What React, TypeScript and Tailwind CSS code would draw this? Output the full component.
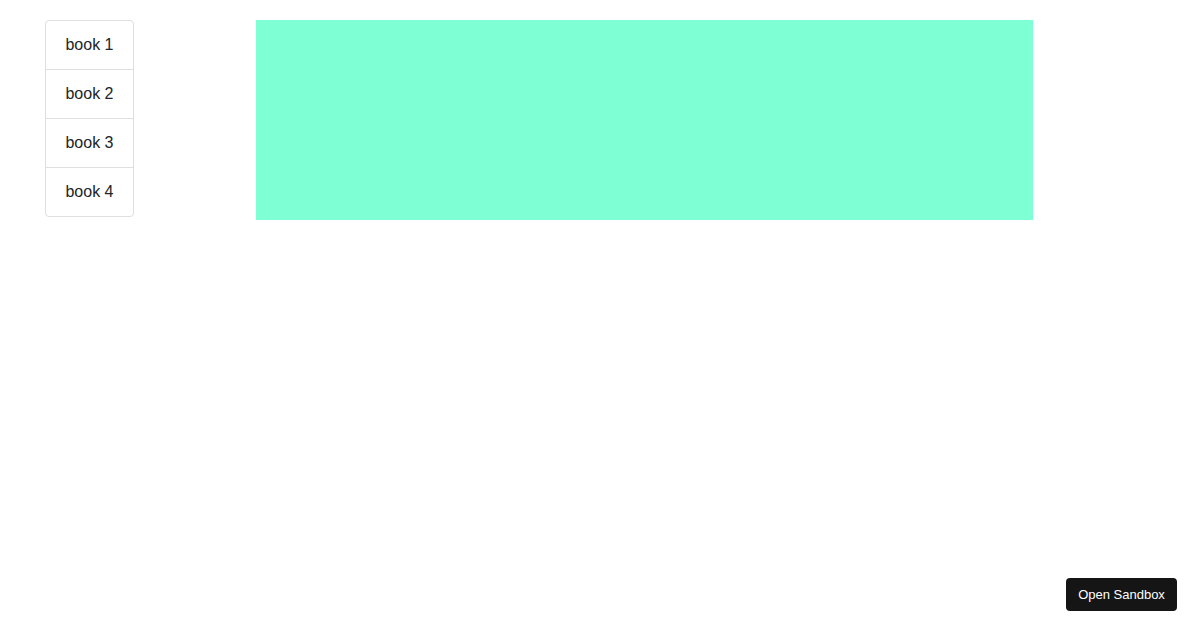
const books = ["book 1", "book 2", "book 3", "book 4"];

export default function App() {
  return (
    <div className="relative h-[630px] w-[1200px] bg-white font-['Liberation_Sans',Arial,sans-serif] text-[#212529]">
      <div className="flex items-start pt-5 pl-[45px]">
        <ul className="flex w-[89px] flex-col rounded border border-[#dfdfdf]">
          {books.map((b, i) => (
            <li
              key={b}
              className={[
                "whitespace-nowrap py-3 text-center text-base leading-6",
                i > 0 ? "border-t border-[#dfdfdf]" : "",
              ].join(" ")}
            >
              {b}
            </li>
          ))}
        </ul>
        <div className="ml-[122px] h-[200px] w-[777px] bg-[#7fffd4]" />
      </div>
      <button className="absolute right-[23px] bottom-[19px] h-[33px] w-[111px] rounded bg-[#151515] text-[13px] text-white">
        Open Sandbox
      </button>
    </div>
  );
}
